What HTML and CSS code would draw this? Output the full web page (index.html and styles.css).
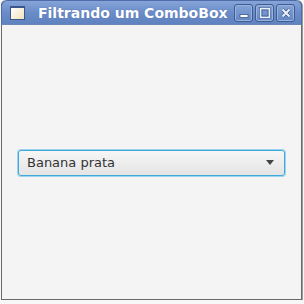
FILE: index.html
```html
<!DOCTYPE html>
<html lang="pt">
<head>
  <meta charset="UTF-8">
  <title>Filtrando um ComboBox</title>
  <link rel="stylesheet" href="styles.css">
</head>
<body>
  <div class="window">
    <div class="titlebar">
      <span class="app-icon"></span>
      <span class="title">Filtrando um ComboBox</span>
      <div class="buttons">
        <span class="wbtn">
          <svg width="12" height="12" viewBox="0 0 12 12"><rect x="2" y="7.5" width="8" height="3" fill="#fff" stroke="#3d5a8c" stroke-width="0.8"/></svg>
        </span>
        <span class="wbtn">
          <svg width="12" height="12" viewBox="0 0 12 12"><rect x="1.5" y="1.5" width="9" height="9" fill="none" stroke="#e8eef8" stroke-width="2"/><rect x="0.5" y="0.5" width="11" height="11" fill="none" stroke="#3d5a8c" stroke-width="0.6"/><rect x="3" y="3" width="6" height="6" fill="none" stroke="#3d5a8c" stroke-width="0.8"/></svg>
        </span>
        <span class="wbtn">
          <svg width="12" height="12" viewBox="0 0 12 12"><path d="M2.5 2.5 L9.5 9.5 M9.5 2.5 L2.5 9.5" stroke="#3d5a8c" stroke-width="3.4"/><path d="M2.5 2.5 L9.5 9.5 M9.5 2.5 L2.5 9.5" stroke="#eef2fa" stroke-width="2"/></svg>
        </span>
      </div>
    </div>
    <div class="content">
      <div class="combo">
        <span class="combo-text">Banana prata</span>
        <span class="arrow"></span>
      </div>
    </div>
  </div>
</body>
</html>
```

FILE: styles.css
```css
body {
  margin: 0;
  padding: 0;
  background-color: #f7f7f7;
  font-family: 'DejaVu Sans', sans-serif;
}

.window {
  width: 299px;
  height: 299px;
  margin-left: 1px;
  border: 1px solid #6a6a6a;
  border-top: none;
  border-radius: 5px 5px 0 0;
  background-color: #f4f4f4;
  display: flex;
  flex-direction: column;
  box-shadow: 1px 1px 0 #9a9a9a;
}

.titlebar {
  height: 25px;
  display: flex;
  align-items: center;
  padding: 0 6px 0 8px;
  background: linear-gradient(#86a4d8, #6a8cc8 50%, #5f82c0);
  border: 1px solid #4d6ca8;
  border-bottom: 1px solid #6b85b5;
  border-radius: 6px 6px 0 0;
  margin: 0 -1px;
  box-sizing: border-box;
}

.app-icon {
  width: 13px;
  height: 11px;
  border: 1px solid #3a568a;
  border-top-width: 2px;
  background: linear-gradient(135deg, #ffffff, #f0e4b8);
  margin-right: 13px;
  margin-top: 1px;
}

.title {
  color: #ffffff;
  font-weight: bold;
  font-size: 14px;
  flex: 1;
  white-space: nowrap;
  text-shadow: 0 0 1px #4d6ca8;
}

.buttons {
  display: flex;
  gap: 2px;
}

.wbtn {
  width: 17px;
  height: 16px;
  border: 1px solid #3f5c92;
  border-radius: 3px;
  background: linear-gradient(#85a3d6, #6386c4);
  box-shadow: inset 0 0 0 1px #9ab3de;
  display: flex;
  align-items: center;
  justify-content: center;
}

.content {
  flex: 1;
  display: flex;
  align-items: center;
  padding: 0 16px 0 16px;
}

.combo {
  flex: 1;
  height: 24px;
  border: 1px solid #3fa9dc;
  border-radius: 3px;
  box-shadow: 0 0 0 1px #9cd4ee;
  background: linear-gradient(#f6f6f6, #e4e4e4);
  display: flex;
  align-items: center;
  padding: 0 8px 0 8px;
  margin-top: 1px;
}

.combo-text {
  flex: 1;
  font-size: 13px;
  color: #333333;
}

.arrow {
  width: 0;
  height: 0;
  border-left: 4px solid transparent;
  border-right: 4px solid transparent;
  border-top: 5px solid #444444;
  margin-right: 2px;
}
```
